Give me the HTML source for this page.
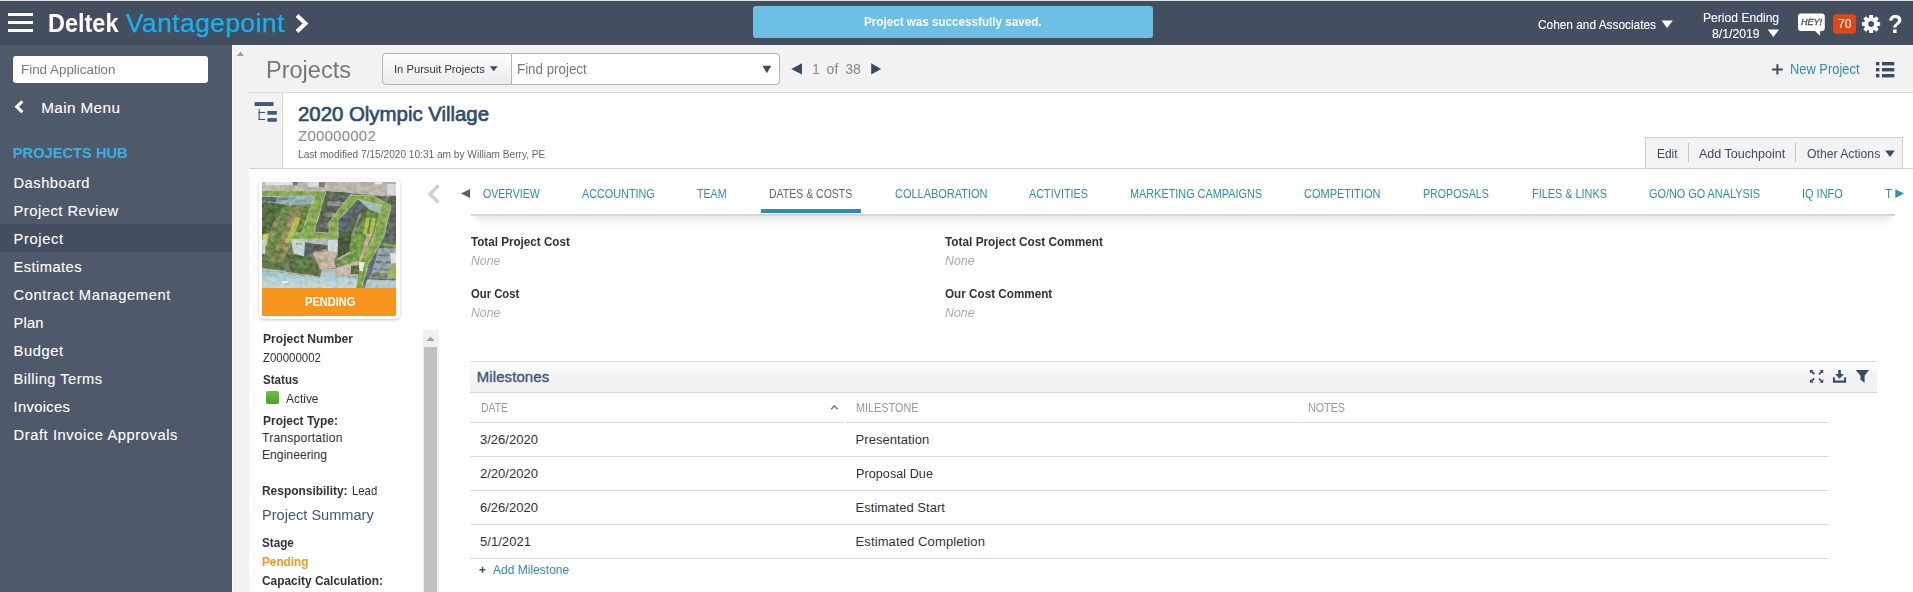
<!DOCTYPE html>
<html><head><meta charset="utf-8"><title>Deltek Vantagepoint</title>
<style>
html,body{margin:0;padding:0;}
body{width:1913px;height:592px;position:relative;overflow:hidden;background:#ffffff;font-family:"Liberation Sans",sans-serif;}
.t{position:absolute;white-space:nowrap;line-height:1;font-family:"Liberation Sans",sans-serif;}
.b{position:absolute;}
svg{position:absolute;overflow:visible;}
.t{transform-origin:0 50%;}
.p{display:inline-block;width:0;height:0;}

</style></head>
<body>
<!-- ===== page chrome ===== -->
<div class="b" style="left:0;top:0;width:1913px;height:45px;background:#434e5f;"></div>
<div class="b" style="left:0;top:0;width:1913px;height:1px;background:#dfe2e6;"></div>
<div class="b" style="left:0;top:45px;width:232px;height:547px;background:#4e5a69;"></div>
<div class="b" style="left:0;top:224px;width:232px;height:28px;background:#434e5f;"></div>
<div class="b" style="left:232px;top:45px;width:1681px;height:47px;background:#f2f2f2;"></div>
<div class="b" style="left:232px;top:92px;width:17px;height:500px;background:#f2f2f2;"></div>
<div class="b" style="left:248px;top:92px;width:1665px;height:1px;background:#dcdcdc;"></div>
<div class="b" style="left:248px;top:93px;width:34px;height:75px;background:#f2f2f2;"></div>
<div class="b" style="left:282px;top:93px;width:1px;height:75px;background:#d9d9d9;"></div>
<div class="b" style="left:249px;top:168px;width:1664px;height:1px;background:#d2d2d2;"></div>
<div class="b" style="left:232px;top:45px;width:1px;height:547px;background:#fbfbfb;"></div>

<!-- hamburger -->
<div class="b" style="left:8px;top:13px;width:25px;height:2.5px;background:#fff;"></div>
<div class="b" style="left:8px;top:21px;width:25px;height:2.5px;background:#fff;"></div>
<div class="b" style="left:8px;top:29px;width:25px;height:2.5px;background:#fff;"></div>
<!-- header chevron -->
<svg style="left:290px;top:10px;" width="24" height="28" viewBox="290 10 24 28"><polyline points="297,15.5 305.5,23.5 297,31.5" fill="none" stroke="#fff" stroke-width="4"/></svg>
<!-- toast -->
<div class="b" style="left:753px;top:6px;width:400px;height:32px;background:#6dbfe3;border-radius:3px;"></div>
<!-- header right icons -->
<svg style="left:0;top:0;" width="1913" height="45" viewBox="0 0 1913 45">
  <polygon points="1661.5,20.5 1672.8,20.5 1667.15,28" fill="#fff"/>
  <polygon points="1767.7,29.5 1779,29.5 1773.35,37" fill="#fff"/>
  <rect x="1798" y="13.4" width="26.8" height="17.6" rx="3" fill="#fff"/>
  <polygon points="1814.5,30.5 1820.3,30.5 1819.9,35.8" fill="#fff"/>
  <rect x="1833" y="14.2" width="23" height="19.6" rx="3" fill="#dd4814"/>
  <path id="gear" fill="#fff" fill-rule="evenodd" d="M1869.01 17.41 L1869.20 14.89 L1872.90 14.89 L1873.09 17.41 L1874.27 17.90 L1876.19 16.25 L1878.80 18.86 L1877.15 20.78 L1877.64 21.96 L1880.16 22.15 L1880.16 25.85 L1877.64 26.04 L1877.15 27.22 L1878.80 29.14 L1876.19 31.75 L1874.27 30.10 L1873.09 30.59 L1872.90 33.11 L1869.20 33.11 L1869.01 30.59 L1867.83 30.10 L1865.91 31.75 L1863.30 29.14 L1864.95 27.22 L1864.46 26.04 L1861.94 25.85 L1861.94 22.15 L1864.46 21.96 L1864.95 20.78 L1863.30 18.86 L1865.91 16.25 L1867.83 17.90Z M1868.15 24.00 a2.9 2.9 0 1 0 5.80 0 a2.9 2.9 0 1 0 -5.80 0Z"/>
</svg>

<!-- sidebar -->
<div class="b" style="left:13px;top:55.5px;width:194.5px;height:27px;background:#fff;border-radius:3px;"></div>
<svg style="left:10px;top:98px;" width="20" height="18" viewBox="10 98 20 18"><polyline points="22.4,101.4 16.7,106.8 22.4,112.2" fill="none" stroke="#fff" stroke-width="3"/></svg>

<!-- outer scroll arrow -->
<svg style="left:232px;top:45px;" width="16" height="16" viewBox="232 45 16 16"><polygon points="236.7,56 244.1,56 240.4,51.6" fill="#a0a0a0"/></svg>

<!-- toolbar controls -->
<div class="b" style="left:382px;top:53px;width:129.5px;height:31.5px;box-sizing:border-box;border:1px solid #b4b4b4;border-radius:4px 0 0 4px;background:linear-gradient(#fdfdfd,#ececec);"></div>
<div class="b" style="left:510.5px;top:53px;width:269px;height:31.5px;box-sizing:border-box;border:1px solid #b4b4b4;border-radius:0 4px 4px 0;background:#fff;"></div>
<svg style="left:232px;top:45px;" width="1681" height="47" viewBox="232 45 1681 47">
  <polygon points="489.8,66.3 497.6,66.3 493.7,71.3" fill="#3b4a63"/>
  <polygon points="762.5,65.8 771.2,65.8 766.85,73.2" fill="#3b4a63"/>
  <polygon points="802,63.2 802,74.6 791.2,68.9" fill="#3b4a63"/>
  <polygon points="871.2,63.2 871.2,74.6 881.2,68.9" fill="#3b4a63"/>
  <path d="M1772 69.4h10.8M1777.4 64.2v10.4" stroke="#3b4a63" stroke-width="2" fill="none"/>
  <g fill="#3b4a63">
    <rect x="1876" y="62" width="3.4" height="3.4"/><rect x="1882" y="62" width="12.3" height="3.4"/>
    <rect x="1876" y="68" width="3.4" height="3.4"/><rect x="1882" y="68" width="12.3" height="3.4"/>
    <rect x="1876" y="74" width="3.4" height="3.4"/><rect x="1882" y="74" width="12.3" height="3.4"/>
  </g>
</svg>

<!-- tree icon -->
<svg style="left:250px;top:98px;" width="32" height="28" viewBox="250 98 32 28">
  <g fill="#3f5a7d"><rect x="254.6" y="102.1" width="18.9" height="3.9"/><rect x="267.4" y="111" width="9.4" height="3.7"/><rect x="267.4" y="118.1" width="9.4" height="3.7"/>
  <rect x="258.6" y="108.9" width="1.1" height="11"/><rect x="258.6" y="111.9" width="6.6" height="1.1"/><rect x="258.6" y="118.9" width="6.6" height="1.1"/></g>
</svg>

<!-- action button group -->
<div class="b" style="left:1645px;top:137px;width:258px;height:32px;box-sizing:border-box;border:1px solid #cfcfcf;background:#f3f3f3;"></div>
<div class="b" style="left:1688px;top:143px;width:1px;height:19px;background:#c4c4c4;"></div>
<div class="b" style="left:1795px;top:143px;width:1px;height:19px;background:#c4c4c4;"></div>
<svg style="left:1880px;top:145px;" width="20" height="16" viewBox="1880 145 20 16"><polygon points="1885.2,150.5 1894.8,150.5 1890,157" fill="#3b4a63"/></svg>

<!-- image card -->
<div class="b" style="left:259px;top:178.5px;width:141px;height:140.5px;background:#fff;border-radius:5px;box-shadow:0 1px 3px rgba(0,0,0,.24);"></div>
<svg style="left:262px;top:182px;" width="134" height="106" viewBox="0 0 134 106">
<defs><filter id="pb" x="-5%" y="-5%" width="110%" height="110%"><feGaussianBlur stdDeviation="0.55"/></filter>
<filter id="nz" x="0" y="0" width="100%" height="100%" color-interpolation-filters="sRGB"><feTurbulence type="fractalNoise" baseFrequency="0.22" numOctaves="2" seed="11"/><feColorMatrix type="matrix" values="1.2 0 0 0 -0.04  1.2 0 0 0 -0.04  1.2 0 0 0 -0.04  0 0 0 0 0.3"/></filter>
<clipPath id="pc"><rect x="0" y="0" width="134" height="106"/></clipPath>
<linearGradient id="wg" x1="0" y1="0" x2="0" y2="1"><stop offset="0" stop-color="#94bcc3"/><stop offset="1" stop-color="#b9d6da"/></linearGradient></defs>
<g clip-path="url(#pc)"><g filter="url(#pb)">
<rect x="-4" y="-4" width="142" height="114" fill="#55624a"/>
<!-- top strip -->
<polygon points="-2,-2 136,-2 136,15 111,13.5 88,11 66,9.5 -2,8.5" fill="#aeaaa4"/>
<polygon points="3,-1 30,-1 30,3 3,3.4" fill="#dededb"/><polygon points="46,-1 57,-1 57,5 46,5" fill="#d4d4d2"/>
<polygon points="31,-1 36,-1 35,3.5 31,3.5" fill="#5a5a58"/><polygon points="57,-1 63,-1 62,5.5 57,5" fill="#66666a"/>
<polygon points="113,-1 120,-1 120,2.2 113,2.2" fill="#e2e2e0"/><polygon points="125,2 136,2 136,13.5 125,12.5" fill="#d3d3d1"/>
<!-- street between buildings -->
<polygon points="64,9 89,11 78,38 67,54 51,54 50,50" fill="#3f4840"/>
<polygon points="66,19 83,20 81,24.5 65,23.5" fill="#7c7f79"/><polygon points="63,30 77,31 75,35.5 62,34.5" fill="#686c66"/>
<polygon points="67,12 86,13 85,16 66,15" fill="#4a5a3c"/><polygon points="60,40 70,41 68,46 58,45" fill="#5d625c"/>
<!-- far right -->
<polygon points="127,14 136,14 136,62 120,61 122.5,52" fill="#4a4d48"/>
<!-- left courtyard -->
<polygon points="0,19 28,23 52,22 41,50 30,52.5 30,57 27,72 0,86" fill="#55742e"/>
<polygon points="0,20 22,22 9,50 0,53" fill="#3b5423"/>
<polygon points="27,35 40,23 46.5,23 32,52 23,76 10,86 3,86 18,60" fill="#85784f"/>
<polygon points="12,38 19,33 8,62 2,66" fill="#6f7a3a"/>
<polygon points="33,36 40,35 31,53 27,61 23,61" fill="#a9b538"/>
<polygon points="0.7,52 7,51.5 5,63 0.7,64" fill="#b7ca55"/>
<polygon points="41,25 50,24 42,49 35,50" fill="#4f6e2b"/>
<polygon points="-1,58 4,58 3,72 -1,72" fill="#b5c5ca"/>
<polygon points="6,70 20,64 24,80 0,84 0,76" fill="#5d6f35"/>
<!-- left facade -->
<polygon points="0,14.5 52.5,14 51,22.3 28,23.2 0,19.6" fill="#7fa1a5"/>
<polygon points="0,15 15,15 14,19.8 0,19.6" fill="#3e5660"/>
<polygon points="15,16 27,15.5 26,18 15,18.5" fill="#56757d"/>
<!-- central courtyard -->
<polygon points="96,17 106.6,27 90,52 78,56 76,57 76,38.3" fill="#3a5226"/>
<polygon points="96,17 103,24 82,51 76,54 76,38.3" fill="#404d55"/>
<polygon points="106.6,27 118.5,32 112,54 107,52 89.7,52 97,44" fill="#4f7a2c"/>
<polygon points="97,32 100,31 92,52 89.7,52" fill="#727a64"/>
<polygon points="104,36 108,35 105,52 101,52" fill="#a6b130"/><polygon points="110,36 114,36.5 110,53 107,52" fill="#9eb034"/>
<polygon points="96,17 119.4,22.8 118.5,32 106.6,27" fill="#8fb0b2"/>
<polygon points="76,57 89.7,52 87,70 76,75.7" fill="#2e3f24"/>
<polygon points="89.7,52 107,52 98,79 97,78.5 74.2,85.8 75,82 87,70" fill="#5f8a30"/>
<polygon points="105,52 110.5,52 100.5,76 98,79.4 97,78.5" fill="#b4a67e"/>
<polygon points="76,76 87,70 88,71.2 77,78.2" fill="#a9b1a1"/>
<!-- green roofs (union) -->
<polygon points="0,8.5 64,9 52,50 67,51 67,40 88,13 111,14 129,23.7 122,54 118,62 106,82 99.8,107 93.4,107 98,79.4 112,54 119.4,23 96,17 76,38.3 76,57 30,57 30,52.5 40,50 52.5,14 1,14.5 0,14.5" fill="#6f9b38" stroke="#b5c79a" stroke-width="0.7" stroke-linejoin="round"/>
<!-- right band outer wall -->
<polygon points="118.9,63 108.9,79.4 99.8,107 103.4,107 109.8,94.9 117,69.3 122.6,63.9" fill="#44546a"/>
<!-- right building -->
<polygon points="117,66 136,66.6 136,97.6 107,95.8 110,90" fill="#87979d"/>
<polygon points="120.7,61 136,63.6 136,66 119.8,63.6" fill="#6a9838"/>
<polygon points="116,72 136,73 136,75 115.5,74" fill="#59636a"/><polygon points="114,79 136,80 136,82 113.5,81" fill="#5d676c"/><polygon points="112,86 127,87 127,89 111,88" fill="#616a6c"/>
<polygon points="128,71 136,71.6 136,81 129,81.7" fill="#d6dee1"/>
<polygon points="127,83 136,83 136,96.7 126,95.8" fill="#8aa840"/>
<polygon points="112,90.5 126,91.5 125,96 108.5,95" fill="#6b6552"/>
<!-- front building -->
<polygon points="28.5,57 76,57.6 76,62.4 28.5,61.2" fill="#b2c3c6"/>
<polygon points="43,57 76,58 76,64.5 48.4,61" fill="#9db1b5"/>
<polygon points="29,58.4 43,59.8 42.4,74.8 31.5,71.6" fill="#bccdd0"/>
<polygon points="34,60.5 40,61 40,63 34,62.5" fill="#7d9a5a"/>
<polygon points="43,60 48.4,61 47.4,74 42.4,75" fill="#3e4d5a"/>
<polygon points="48.4,61 64.8,64 64,66.8 49.3,70.4" fill="#45453d"/>
<polygon points="49.3,70.4 64,66.8 66,68 51,72" fill="#8a8078"/>
<polygon points="66,57.8 75,58 75.6,71 66,71.6" fill="#c6d4d7"/>
<!-- plaza + trees -->
<polygon points="51,71 66,69 75.6,71 72,78 74.2,86 58,87.5 54,78" fill="#bfa898"/>
<polygon points="56,77 66,76.6 65,79.4 58.4,80.7" fill="#88a84e"/>
<polygon points="25.5,72 51,75.7 58.4,91.5 31,90.5 27,82" fill="#3d5a28"/>
<polygon points="34,78 46,79 50,86 36,86" fill="#47672d"/>
<polygon points="0,78 22,80 24,89 0,87" fill="#4a6530"/>
<polygon points="74.2,85.8 97,78.5 96,94.5 73.3,93.5" fill="#bfae9c"/>
<polygon points="89,84 97,83 97,92 89,92.5" fill="#3f5528"/>
<polygon points="97,79.4 102.5,80.3 100.7,89.6 97.5,88.6" fill="#e3e8e3"/>
<!-- water -->
<polygon points="-1,88 24.6,91 58.4,96 60.2,88 73.5,88 73,94 96,96.6 93.4,108 -1,108" fill="url(#wg)"/>
<polygon points="105,97.6 136,98.5 136,108 102.5,108" fill="#9fc2c8"/>
<polygon points="-1,86.7 23.7,88.5 23.7,90.6 -1,89.6" fill="#7ea7c0"/>
<polyline points="-1,86.6 24.6,90.4 58.6,95.4 60.4,87.6 74,87.3 73.4,93.4 96,96" fill="none" stroke="#b3aa94" stroke-width="1.3"/>
<ellipse cx="22.8" cy="100" rx="3.4" ry="1.1" fill="#eef4f4"/>
</g>
<rect id="haze" x="0" y="0" width="134" height="106" fill="#f4f1e6" opacity=".13"/>
<rect x="0" y="0" width="134" height="106" filter="url(#nz)" style="mix-blend-mode:overlay"/>
</g>
</svg>

<div class="b" style="left:262px;top:288px;width:134px;height:27.5px;background:#f7941d;"></div>

<!-- tabs -->
<svg style="left:424px;top:180px;" width="50" height="30" viewBox="424 180 50 30">
  <polyline points="438.5,185.5 430,194 438.5,202.5" fill="none" stroke="#cfcfcf" stroke-width="3.4"/>
  <polygon points="470,189 470,198 461,193.5" fill="#606060"/>
</svg>
<div class="b" style="left:471px;top:172px;width:1424px;height:41.5px;background:#fff;border-bottom:2px solid #d6d6d6;box-shadow:0 9px 8px -5px rgba(0,0,0,.11);"></div>
<div class="b" style="left:761px;top:209.3px;width:99.7px;height:4px;background:#2b8cbb;"></div>
<svg style="left:1890px;top:185px;" width="20" height="18" viewBox="1890 185 20 18"><polygon points="1895.3,189.2 1895.3,198 1904,193.6" fill="#2b8cbb"/></svg>

<!-- status square -->
<div class="b" style="left:265.8px;top:391.2px;width:13.2px;height:12.6px;border-radius:2px;background:linear-gradient(#6cc040,#4f9f2a);"></div>

<!-- inner scrollbar -->
<div class="b" style="left:422.5px;top:330px;width:16.3px;height:262px;background:#f1f1f1;"></div>
<div class="b" style="left:424.3px;top:347.3px;width:12.5px;height:245px;background:#c1c1c1;"></div>
<svg style="left:422px;top:330px;" width="17" height="17" viewBox="422 330 17 17"><polygon points="426.4,341 434.6,341 430.5,336.7" fill="#a3a3a3"/></svg>

<!-- milestones -->
<div class="b" style="left:470px;top:361px;width:1407px;height:32px;box-sizing:border-box;border-top:1px solid #dcdcdc;border-bottom:1px solid #d6d6d6;background:linear-gradient(#ffffff,#f4f4f4 45%,#f0f0f0);"></div>
<div class="b" style="left:470px;top:421.5px;width:1358.5px;height:1.5px;background:#dadada;"></div>
<div class="b" style="left:844px;top:421.5px;width:1.5px;height:1.5px;background:#fff;"></div>
<div class="b" style="left:1297.5px;top:421.5px;width:1.5px;height:1.5px;background:#fff;"></div>
<div class="b" style="left:470px;top:456px;width:1358.5px;height:1px;background:#dddddd;"></div>
<div class="b" style="left:470px;top:490px;width:1358.5px;height:1px;background:#dddddd;"></div>
<div class="b" style="left:470px;top:524px;width:1358.5px;height:1px;background:#dddddd;"></div>
<div class="b" style="left:470px;top:558px;width:1358.5px;height:1px;background:#dddddd;"></div>
<svg style="left:470px;top:361px;" width="1407" height="231" viewBox="470 361 1407 231">
  <polyline points="831.2,409.2 834.4,405.8 837.6,409.2" fill="none" stroke="#777" stroke-width="1.6"/>
  <path d="M479.5 569.8h6M482.5 566.8v6" stroke="#3b4a63" stroke-width="1.4" fill="none"/>
  <g fill="#3b4a63" stroke="none">
    <!-- expand -->
    <path d="M1809.9 369.9h3.7l-1.2 1.2 2.5 2.5-1.2 1.2-2.5-2.5-1.3 1.3z"/>
    <path d="M1823.3 369.9v3.7l-1.2-1.2-2.5 2.5-1.2-1.2 2.5-2.5-1.3-1.3z"/>
    <path d="M1809.9 382.8v-3.7l1.2 1.2 2.5-2.5 1.2 1.2-2.5 2.5 1.3 1.3z"/>
    <path d="M1823.3 382.8h-3.7l1.2-1.2-2.5-2.5 1.2-1.2 2.5 2.5 1.3-1.3z"/>
    <!-- download -->
    <path d="M1838.2 370.1h2.7v3.8h3.1l-4.45 4.9-4.45-4.9h3.1z"/>
    <path d="M1832.9 377.2h2v3.4h9.2v-3.4h2v5.6h-13.2z"/>
    <!-- filter -->
    <path d="M1855.7 369.9h13.4l-4.5 5.9v7l-4.1-3.1v-3.9z"/>
  </g>
</svg>

<span class="t" id="t0" style="left:47.50px;top:10.02px;font-size:26.3px;font-weight:700;color:#ffffff;transform:scaleX(0.8931);">Deltek</span>
<span class="t" id="t1" style="left:126.00px;top:10.02px;font-size:26.3px;font-weight:400;color:#12b3ec;-webkit-text-stroke:0.25px #12b3ec;letter-spacing:0.496px;">Vantagepoint</span>
<span class="t" id="t2" style="left:864.00px;top:15.01px;font-size:13.02px;font-weight:700;color:#ffffff;transform:scaleX(0.8954);">Project was successfully saved.</span>
<span class="t" id="t3" style="left:1538.40px;top:18.01px;font-size:13px;font-weight:400;color:#ffffff;-webkit-text-stroke:0.1px #fff;transform:scaleX(0.9121);">Cohen and Associates</span>
<span class="t" id="t4" style="left:1702.60px;top:11.01px;font-size:13px;font-weight:400;color:#ffffff;-webkit-text-stroke:0.1px #fff;transform:scaleX(0.9318);">Period Ending</span>
<span class="t" id="t5" style="left:1712.00px;top:28.01px;font-size:12.8px;font-weight:400;color:#ffffff;-webkit-text-stroke:0.1px #fff;transform:scaleX(0.9573);">8/1/2019</span>
<span class="t" id="t6" style="left:1837.70px;top:17.02px;font-size:13.49px;font-weight:400;color:#ffffff;-webkit-text-stroke:0.1px #fff;transform:scaleX(0.9000);">70</span>
<span class="t" id="t7" style="left:1887.60px;top:11.01px;font-size:26.04px;font-weight:700;color:#ffffff;transform:scaleX(0.9242);">?</span>
<span class="t" id="t8" style="left:1801.20px;top:17.01px;font-size:9.6px;font-weight:400;color:#3c4658;font-style:italic;-webkit-text-stroke:0.3px #3c4658;transform:scaleX(0.9417);">HEY!</span>
<span class="t" id="t9" style="left:20.50px;top:63.02px;font-size:13.49px;font-weight:400;color:#777777;transform:scaleX(0.9926);">Find Application</span>
<span class="t" id="t10" style="left:41.20px;top:100.00px;font-size:15.3px;font-weight:400;color:#ffffff;-webkit-text-stroke:0.1px #fff;letter-spacing:0.381px;">Main Menu</span>
<span class="t" id="t11" style="left:12.80px;top:146.00px;font-size:14.7px;font-weight:700;color:#3bade3;letter-spacing:-0.015px;">PROJECTS HUB</span>
<span class="t" id="t12" style="left:13.50px;top:176.00px;font-size:14.7px;font-weight:400;color:#ffffff;-webkit-text-stroke:0.1px #fff;letter-spacing:0.516px;">Dashboard</span>
<span class="t" id="t13" style="left:13.50px;top:204.00px;font-size:14.7px;font-weight:400;color:#ffffff;-webkit-text-stroke:0.1px #fff;letter-spacing:0.521px;">Project Review</span>
<span class="t" id="t14" style="left:13.50px;top:232.00px;font-size:14.7px;font-weight:400;color:#ffffff;-webkit-text-stroke:0.1px #fff;letter-spacing:0.647px;">Project</span>
<span class="t" id="t15" style="left:13.50px;top:260.00px;font-size:14.7px;font-weight:400;color:#ffffff;-webkit-text-stroke:0.1px #fff;letter-spacing:0.446px;">Estimates</span>
<span class="t" id="t16" style="left:13.50px;top:288.00px;font-size:14.7px;font-weight:400;color:#ffffff;-webkit-text-stroke:0.1px #fff;letter-spacing:0.641px;">Contract Management</span>
<span class="t" id="t17" style="left:13.50px;top:316.00px;font-size:14.7px;font-weight:400;color:#ffffff;-webkit-text-stroke:0.1px #fff;letter-spacing:0.211px;">Plan</span>
<span class="t" id="t18" style="left:13.50px;top:344.00px;font-size:14.7px;font-weight:400;color:#ffffff;-webkit-text-stroke:0.1px #fff;letter-spacing:0.615px;">Budget</span>
<span class="t" id="t19" style="left:13.50px;top:372.00px;font-size:14.7px;font-weight:400;color:#ffffff;-webkit-text-stroke:0.1px #fff;letter-spacing:0.463px;">Billing Terms</span>
<span class="t" id="t20" style="left:13.50px;top:400.00px;font-size:14.7px;font-weight:400;color:#ffffff;-webkit-text-stroke:0.1px #fff;letter-spacing:0.357px;">Invoices</span>
<span class="t" id="t21" style="left:13.50px;top:428.00px;font-size:14.7px;font-weight:400;color:#ffffff;-webkit-text-stroke:0.1px #fff;letter-spacing:0.586px;">Draft Invoice Approvals</span>
<span class="t" id="t22" style="left:266.00px;top:58.01px;font-size:24.18px;font-weight:400;color:#777777;transform:scaleX(0.9733);">Projects</span>
<span class="t" id="t23" style="left:394.00px;top:63.01px;font-size:11.62px;font-weight:400;color:#333333;transform:scaleX(0.9639);">In Pursuit Projects</span>
<span class="t" id="t24" style="left:517.00px;top:63.02px;font-size:13.95px;font-weight:400;color:#777777;transform:scaleX(0.9577);">Find project</span>
<span class="t" id="t25" style="left:811.75px;top:62.02px;font-size:14.5px;font-weight:400;color:#8a8a8a;word-spacing:3px;transform:scaleX(0.9683);">1 of 38</span>
<span class="t" id="t26" style="left:1790.25px;top:63.02px;font-size:13.95px;font-weight:400;color:#2b8cbb;transform:scaleX(0.9249);">New Project</span>
<span class="t" id="t27" style="left:298.00px;top:104.00px;font-size:20.46px;font-weight:400;color:#2f4a6d;-webkit-text-stroke:0.65px #2f4a6d;letter-spacing:-0.031px;">2020 Olympic Village</span>
<span class="t" id="t28" style="left:298.00px;top:129.01px;font-size:14.88px;font-weight:400;color:#8a8a8a;letter-spacing:0.302px;">Z00000002</span>
<span class="t" id="t29" style="left:298.25px;top:150.01px;font-size:10.23px;font-weight:400;color:#666666;transform:scaleX(0.9905);">Last modified 7/15/2020 10:31 am by William Berry, PE</span>
<span class="t" id="t30" style="left:1657.25px;top:147.01px;font-size:13.02px;font-weight:400;color:#3b4a63;transform:scaleX(0.9136);">Edit</span>
<span class="t" id="t31" style="left:1699.00px;top:147.01px;font-size:13.02px;font-weight:400;color:#3b4a63;transform:scaleX(0.9637);">Add Touchpoint</span>
<span class="t" id="t32" style="left:1806.50px;top:147.01px;font-size:13.02px;font-weight:400;color:#3b4a63;transform:scaleX(0.9374);">Other Actions</span>
<span class="t" id="t33" style="left:483.25px;top:188.00px;font-size:12.09px;font-weight:400;color:#2b8cbb;transform:scaleX(0.8745);">OVERVIEW</span>
<span class="t" id="t34" style="left:581.75px;top:188.00px;font-size:12.09px;font-weight:400;color:#2b8cbb;transform:scaleX(0.8959);">ACCOUNTING</span>
<span class="t" id="t35" style="left:697.00px;top:188.00px;font-size:12.09px;font-weight:400;color:#2b8cbb;transform:scaleX(0.8790);">TEAM</span>
<span class="t" id="t36" style="left:769.25px;top:188.00px;font-size:12.09px;font-weight:400;color:#666666;transform:scaleX(0.8695);">DATES &amp; COSTS</span>
<span class="t" id="t37" style="left:894.50px;top:188.00px;font-size:12.09px;font-weight:400;color:#2b8cbb;transform:scaleX(0.9087);">COLLABORATION</span>
<span class="t" id="t38" style="left:1029.00px;top:188.00px;font-size:12.09px;font-weight:400;color:#2b8cbb;transform:scaleX(0.8969);">ACTIVITIES</span>
<span class="t" id="t39" style="left:1130.00px;top:188.00px;font-size:12.09px;font-weight:400;color:#2b8cbb;transform:scaleX(0.8995);">MARKETING CAMPAIGNS</span>
<span class="t" id="t40" style="left:1304.30px;top:188.00px;font-size:12.09px;font-weight:400;color:#2b8cbb;transform:scaleX(0.9109);">COMPETITION</span>
<span class="t" id="t41" style="left:1423.20px;top:188.00px;font-size:12.09px;font-weight:400;color:#2b8cbb;transform:scaleX(0.8830);">PROPOSALS</span>
<span class="t" id="t42" style="left:1531.50px;top:188.00px;font-size:12.09px;font-weight:400;color:#2b8cbb;transform:scaleX(0.9009);">FILES &amp; LINKS</span>
<span class="t" id="t43" style="left:1648.50px;top:188.00px;font-size:12.09px;font-weight:400;color:#2b8cbb;transform:scaleX(0.9004);">GO/NO GO ANALYSIS</span>
<span class="t" id="t44" style="left:1801.50px;top:188.00px;font-size:12.09px;font-weight:400;color:#2b8cbb;transform:scaleX(0.9062);">IQ INFO</span>
<span class="t" id="t45" style="left:1884.75px;top:188.00px;font-size:12.09px;font-weight:400;color:#2b8cbb;transform:scaleX(0.9810);">T</span>
<span class="t" id="t46" style="left:470.75px;top:236.00px;font-size:12.09px;font-weight:700;color:#333333;transform:scaleX(0.9639);">Total Project Cost</span>
<span class="t" id="t47" style="left:470.75px;top:254.01px;font-size:13.02px;font-weight:400;color:#aaaaaa;font-style:italic;transform:scaleX(0.9398);">None</span>
<span class="t" id="t48" style="left:470.75px;top:288.00px;font-size:12.09px;font-weight:700;color:#333333;transform:scaleX(0.9338);">Our Cost</span>
<span class="t" id="t49" style="left:470.75px;top:306.01px;font-size:13.02px;font-weight:400;color:#aaaaaa;font-style:italic;transform:scaleX(0.9398);">None</span>
<span class="t" id="t50" style="left:944.50px;top:236.00px;font-size:12.09px;font-weight:700;color:#333333;transform:scaleX(0.9782);">Total Project Cost Comment</span>
<span class="t" id="t51" style="left:944.50px;top:254.01px;font-size:13.02px;font-weight:400;color:#aaaaaa;font-style:italic;transform:scaleX(0.9478);">None</span>
<span class="t" id="t52" style="left:944.50px;top:288.00px;font-size:12.09px;font-weight:700;color:#333333;transform:scaleX(0.9685);">Our Cost Comment</span>
<span class="t" id="t53" style="left:944.50px;top:306.01px;font-size:13.02px;font-weight:400;color:#aaaaaa;font-style:italic;transform:scaleX(0.9478);">None</span>
<span class="t" id="t54" style="left:262.50px;top:333.01px;font-size:12.56px;font-weight:700;color:#333333;transform:scaleX(0.9632);">Project Number</span>
<span class="t" id="t55" style="left:262.50px;top:352.00px;font-size:12.09px;font-weight:400;color:#333333;transform:scaleX(0.9489);">Z00000002</span>
<span class="t" id="t56" style="left:262.50px;top:374.01px;font-size:12.56px;font-weight:700;color:#333333;transform:scaleX(0.9255);">Status</span>
<span class="t" id="t57" style="left:286.25px;top:393.00px;font-size:12.09px;font-weight:400;color:#333333;transform:scaleX(0.9881);">Active</span>
<span class="t" id="t58" style="left:262.50px;top:415.01px;font-size:12.56px;font-weight:700;color:#333333;transform:scaleX(0.9547);">Project Type:</span>
<span class="t" id="t59" style="left:262.00px;top:432.01px;font-size:12.09px;font-weight:400;color:#333333;letter-spacing:0.226px;">Transportation</span>
<span class="t" id="t60" style="left:262.00px;top:449.01px;font-size:12.09px;font-weight:400;color:#333333;letter-spacing:0.048px;">Engineering</span>
<span class="t" id="t61" style="left:262.00px;top:485.01px;font-size:12.56px;font-weight:700;color:#333333;transform:scaleX(0.9518);">Responsibility:</span>
<span class="t" id="t62" style="left:352.40px;top:485.02px;font-size:12.09px;font-weight:400;color:#333333;transform:scaleX(0.9377);">Lead</span>
<span class="t" id="t63" style="left:262.00px;top:508.01px;font-size:14.88px;font-weight:400;color:#42587a;transform:scaleX(0.9792);">Project Summary</span>
<span class="t" id="t64" style="left:262.00px;top:537.01px;font-size:12.56px;font-weight:700;color:#333333;transform:scaleX(0.9306);">Stage</span>
<span class="t" id="t65" style="left:262.00px;top:556.01px;font-size:12.56px;font-weight:700;color:#f7941d;transform:scaleX(0.9374);">Pending</span>
<span class="t" id="t66" style="left:262.00px;top:575.01px;font-size:12.56px;font-weight:700;color:#333333;transform:scaleX(0.9483);">Capacity Calculation:</span>
<span class="t" id="t67" style="left:304.50px;top:296.01px;font-size:12.56px;font-weight:700;color:#ffffff;transform:scaleX(0.8833);">PENDING</span>
<span class="t" id="t68" style="left:476.75px;top:370.01px;font-size:14.88px;font-weight:400;color:#42587a;-webkit-text-stroke:0.4px #42587a;letter-spacing:0.139px;">Milestones</span>
<span class="t" id="t69" style="left:480.50px;top:402.00px;font-size:12.09px;font-weight:400;color:#999999;transform:scaleX(0.8618);">DATE</span>
<span class="t" id="t70" style="left:855.50px;top:402.00px;font-size:12.09px;font-weight:400;color:#999999;transform:scaleX(0.8981);">MILESTONE</span>
<span class="t" id="t71" style="left:1308.40px;top:402.00px;font-size:12.09px;font-weight:400;color:#999999;transform:scaleX(0.8892);">NOTES</span>
<span class="t" id="t72" style="left:480.00px;top:433.01px;font-size:13.02px;font-weight:400;color:#333333;letter-spacing:0.010px;">3/26/2020</span>
<span class="t" id="t73" style="left:855.50px;top:433.01px;font-size:13.02px;font-weight:400;color:#333333;letter-spacing:0.055px;">Presentation</span>
<span class="t" id="t74" style="left:480.00px;top:467.01px;font-size:13.02px;font-weight:400;color:#333333;letter-spacing:0.010px;">2/20/2020</span>
<span class="t" id="t75" style="left:855.50px;top:467.01px;font-size:13.02px;font-weight:400;color:#333333;transform:scaleX(0.9762);">Proposal Due</span>
<span class="t" id="t76" style="left:480.00px;top:501.01px;font-size:13.02px;font-weight:400;color:#333333;letter-spacing:0.010px;">6/26/2020</span>
<span class="t" id="t77" style="left:855.50px;top:501.01px;font-size:13.02px;font-weight:400;color:#333333;letter-spacing:0.034px;">Estimated Start</span>
<span class="t" id="t78" style="left:480.00px;top:535.01px;font-size:13.02px;font-weight:400;color:#333333;letter-spacing:0.041px;">5/1/2021</span>
<span class="t" id="t79" style="left:855.50px;top:535.01px;font-size:13.02px;font-weight:400;color:#333333;letter-spacing:0.109px;">Estimated Completion</span>
<span class="t" id="t80" style="left:493.00px;top:564.01px;font-size:12.56px;font-weight:400;color:#2b8cbb;transform:scaleX(0.9589);">Add Milestone</span>
</body></html>
